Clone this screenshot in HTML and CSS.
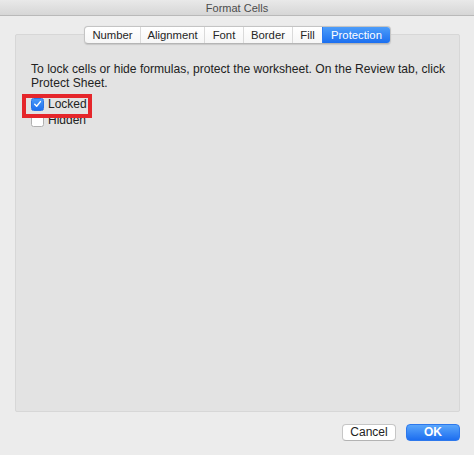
FILE: index.html
```html
<!DOCTYPE html>
<html>
<head>
<meta charset="utf-8">
<link rel="stylesheet" href="styles.css">
</head>
<body>
<div class="window">
  <div class="titlebar">Format Cells</div>
  <div class="content">
    <div class="panel">
      <div class="tabs">
        <div class="tab t-number">Number</div>
        <div class="tab t-align">Alignment</div>
        <div class="tab t-font">Font</div>
        <div class="tab t-border">Border</div>
        <div class="tab t-fill">Fill</div>
        <div class="tab t-prot active">Protection</div>
      </div>
      <div class="body">
        <p class="desc">To lock cells or hide formulas, protect the worksheet. On the Review tab, click Protect Sheet.</p>
        <div class="checks">
          <label class="check"><span class="box checked"><svg viewBox="0 0 12 12" width="12" height="12"><path d="M3 6.2 L5.1 8.4 L9.2 3.4" fill="none" stroke="#fff" stroke-width="1.6" stroke-linecap="round" stroke-linejoin="round"/></svg></span>Locked</label>
          <label class="check"><span class="box"></span>Hidden</label>
          <div class="highlight"></div>
        </div>
      </div>
    </div>
    <div class="buttons">
      <button class="btn cancel">Cancel</button>
      <button class="btn ok">OK</button>
    </div>
  </div>
</div>
</body>
</html>
```
FILE: styles.css
```css
html, body {
  margin: 0;
  padding: 0;
}
body {
  width: 474px;
  height: 455px;
  overflow: hidden;
  font-family: "Liberation Sans", Arial, sans-serif;
  background: #ececec;
}
.window {
  width: 474px;
  height: 455px;
  display: flex;
  flex-direction: column;
  background: #ececec;
}
.titlebar {
  height: 15px;
  line-height: 16px;
  border-bottom: 1px solid #b9b9b9;
  background: linear-gradient(#e9e9e9, #d6d6d6);
  text-align: center;
  font-size: 11px;
  color: #4c4c4c;
}
.content {
  flex: 1;
  display: flex;
  flex-direction: column;
  padding: 18px 14px 0 15px;
}
.panel {
  height: 376px;
  background: #e3e3e3;
  border: 1px solid #d7d7d7;
  border-radius: 2px;
  display: flex;
  flex-direction: column;
}
.tabs {
  align-self: center;
  margin-top: -9px;
  display: flex;
  height: 16px;
  background: linear-gradient(#ffffff, #f6f6f6);
  border: 1px solid #c4c4c4;
  border-bottom-color: #b5b5b5;
  border-radius: 4px;
  box-shadow: 0 0.5px 1px rgba(0,0,0,0.12);
  font-size: 11.3px;
  line-height: 16px;
  color: #262626;
  overflow: hidden;
}
.tab {
  text-align: center;
  border-left: 1px solid #dadada;
}
.tab:first-child { border-left: none; }
.t-number { width: 55px; }
.t-align { width: 63px; }
.t-font { width: 38px; }
.t-border { width: 48px; }
.t-fill { width: 29px; }
.t-prot { width: 67px; }
.tab.active {
  background: linear-gradient(#4d9df9, #1b6ff0);
  color: #fff;
  border-left-color: #2b7af2;
}
.body {
  padding: 18px 0 0 15px;
}
.desc {
  margin: 0;
  font-size: 12.1px;
  line-height: 14px;
  color: #222;
  width: 430px;
}
.checks {
  position: relative;
  margin-top: 6px;
}
.check {
  display: flex;
  align-items: center;
  height: 16px;
  font-size: 12px;
  color: #222;
}
.box {
  width: 11px;
  height: 11px;
  margin-right: 4px;
  border: 0.5px solid #b0b0b0;
  border-radius: 2.5px;
  background: #fff;
  display: flex;
  align-items: center;
  justify-content: center;
}
.box.checked {
  background: linear-gradient(#4a9af8, #1f70ee);
  border-color: #2a74e6;
}
.highlight {
  position: absolute;
  left: -9px;
  top: -2px;
  width: 62px;
  height: 16px;
  border: 4px solid #e5262b;
}
.buttons {
  display: flex;
  justify-content: flex-end;
  gap: 10px;
  margin-top: 12px;
}
.btn {
  height: 17px;
  padding: 0;
  border-radius: 4px;
  font-family: "Liberation Sans", Arial, sans-serif;
  font-size: 12px;
  line-height: 15px;
  width: 54px;
}
.cancel {
  background: #fff;
  border: 1px solid #c6c6c6;
  border-bottom-color: #b3b3b3;
  color: #222;
}
.ok {
  background: linear-gradient(#5aa6fb, #1d6ef0);
  border: 1px solid #2d78ec;
  color: #fff;
  font-weight: bold;
}
```
